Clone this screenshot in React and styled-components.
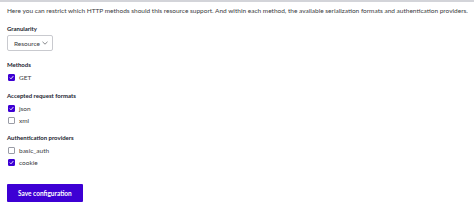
import React from 'react'
import styled, { createGlobalStyle } from 'styled-components'

const GlobalStyle = createGlobalStyle`
  html, body {
    margin: 0;
    padding: 0;
    background: #ffffff;
  }
  body {
    font-family: Lato, 'Open Sans', sans-serif;
    color: #222330;
  }
`;

const Page = styled.div`
  width: 474px;
  height: 210px;
  box-sizing: border-box;
  border-top: 2px solid #d3d4d9;
  padding: 4px 7px 0 7px;
  overflow: hidden;
`;

const Intro = styled.p`
  margin: 0;
  font-size: 6.5px;
  line-height: 10px;
  color: #3b3c42;
  white-space: nowrap;
`;

const Group = styled.div`
  margin-top: ${p => p.$gap}px;
`;

const GroupTitle = styled.div`
  font-size: 6px;
  font-weight: 700;
  line-height: 8px;
  color: #222330;
`;

const SelectBox = styled.div`
  margin-top: 2px;
  width: 46px;
  height: 16px;
  box-sizing: border-box;
  border: 1px solid #c9cacf;
  border-radius: 2px;
  display: flex;
  align-items: center;
  justify-content: center;
  gap: 2px;
  padding-left: 2px;
  font-size: 6.5px;
  color: #3b3c42;
`;

const Options = styled.div`
  margin-top: 2px;
  display: flex;
  flex-direction: column;
`;

const Row = styled.label`
  height: 12px;
  display: flex;
  align-items: center;
  gap: 4px;
  padding-left: 1px;
  font-size: 6.5px;
  color: #3b3c42;
`;

const Box = styled.span`
  width: 7px;
  height: 7px;
  box-sizing: border-box;
  border-radius: 1px;
  border: 1px solid ${p => (p.$on ? '#3d00d4' : '#9a9ca6')};
  background: ${p => (p.$on ? '#3d00d4' : '#ffffff')};
  display: flex;
  align-items: center;
  justify-content: center;
`;

const Button = styled.button`
  margin-top: 16px;
  height: 18px;
  padding: 0 11px;
  border: none;
  border-radius: 1px;
  background: #3d00d4;
  color: #ffffff;
  font-family: Lato, 'Open Sans', sans-serif;
  font-size: 6.5px;
  font-weight: 700;
  cursor: pointer;
`;

function Chevron() {
  return (
    <svg width="6" height="4" viewBox="0 0 6 4">
      <path d="M0.5 0.8 L3 3.2 L5.5 0.8" fill="none" stroke="#55565b" strokeWidth="0.7" />
    </svg>
  )
}

function Check({ on, label }) {
  return (
    <Row>
      <Box $on={on}>
        {on && (
          <svg width="5" height="5" viewBox="0 0 5 5">
            <path d="M0.8 2.6 L2 3.8 L4.3 1.1" fill="none" stroke="#fff" strokeWidth="0.9" />
          </svg>
        )}
      </Box>
      {label}
    </Row>
  )
}

function App() {
  return (
    <Page>
      <GlobalStyle />
      <Intro>
        Here you can restrict which HTTP methods should this resource support. And within each method, the available serialization formats and authentication providers.
      </Intro>
      <Group $gap={9}>
        <GroupTitle>Granularity</GroupTitle>
        <SelectBox>
          Resource <Chevron />
        </SelectBox>
      </Group>
      <Group $gap={10}>
        <GroupTitle>Methods</GroupTitle>
        <Options>
          <Check on label="GET" />
        </Options>
      </Group>
      <Group $gap={9}>
        <GroupTitle>Accepted request formats</GroupTitle>
        <Options>
          <Check on label="json" />
          <Check label="xml" />
        </Options>
      </Group>
      <Group $gap={8}>
        <GroupTitle>Authentication providers</GroupTitle>
        <Options>
          <Check label="basic_auth" />
          <Check on label="cookie" />
        </Options>
      </Group>
      <Button>Save configuration</Button>
    </Page>
  )
}

export default App
